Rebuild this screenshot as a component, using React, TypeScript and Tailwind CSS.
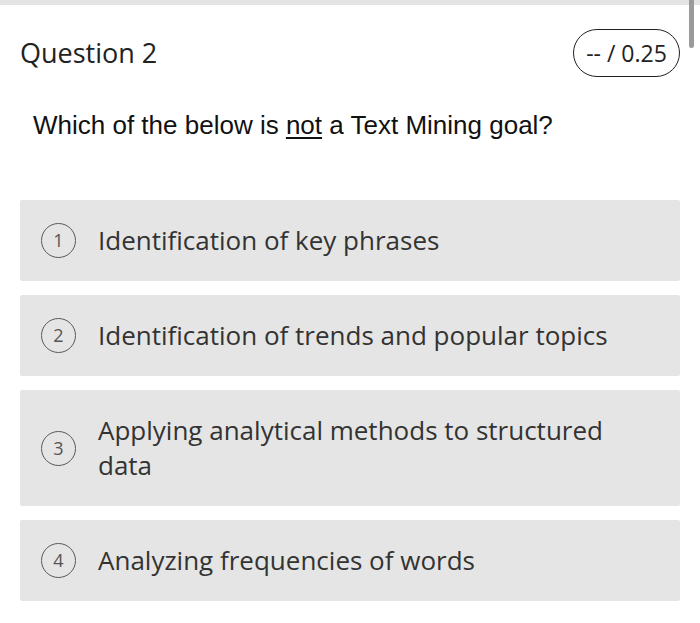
const options = [
  "Identification of key phrases",
  "Identification of trends and popular topics",
  "Applying analytical methods to structured data",
  "Analyzing frequencies of words",
]

export default function App() {
  return (
    <div className="relative h-[623px] w-[700px] overflow-hidden bg-white font-['Open_Sans',sans-serif]">
      {/* top strip + scrollbar */}
      <div className="h-[5px] w-full bg-[#e4e4e4]" />
      <div className="absolute right-[6px] top-0 h-[48px] w-[5px] rounded-b-full bg-[#9a9a9a]" />

      <div className="px-[20px]">
        <div className="mt-[24px] flex items-center justify-between">
          <h2 className="text-[27px] leading-[36px] text-[#222]">Question 2</h2>
          <div className="flex h-[48px] w-[107px] items-center justify-center rounded-full border-[1.5px] border-[#222] text-[23px] text-[#222]">
            -- / 0.25
          </div>
        </div>

        <p className="mt-[31px] pl-[13px] font-['Liberation_Sans',Arial,sans-serif] text-[26px] leading-[34px] text-[#111]">
          Which of the below is <span className="underline underline-offset-[3px]">not</span> a Text Mining goal?
        </p>

        <div className="mt-[58px] flex flex-col gap-[14px]">
          {options.map((text, i) => (
            <div
              key={i}
              className="flex min-h-[81px] items-center rounded-[2px] bg-[#e5e5e5] py-[23px] pl-[21px] pr-[30px]"
            >
              <div className="mr-[22px] flex h-[35px] w-[35px] shrink-0 items-center justify-center rounded-full border-[1.5px] border-[#5a5a5a] text-[18px] text-[#555]">
                {i + 1}
              </div>
              <span className="text-[26px] leading-[35px] text-[#333]">{text}</span>
            </div>
          ))}
        </div>
      </div>
    </div>
  )
}
